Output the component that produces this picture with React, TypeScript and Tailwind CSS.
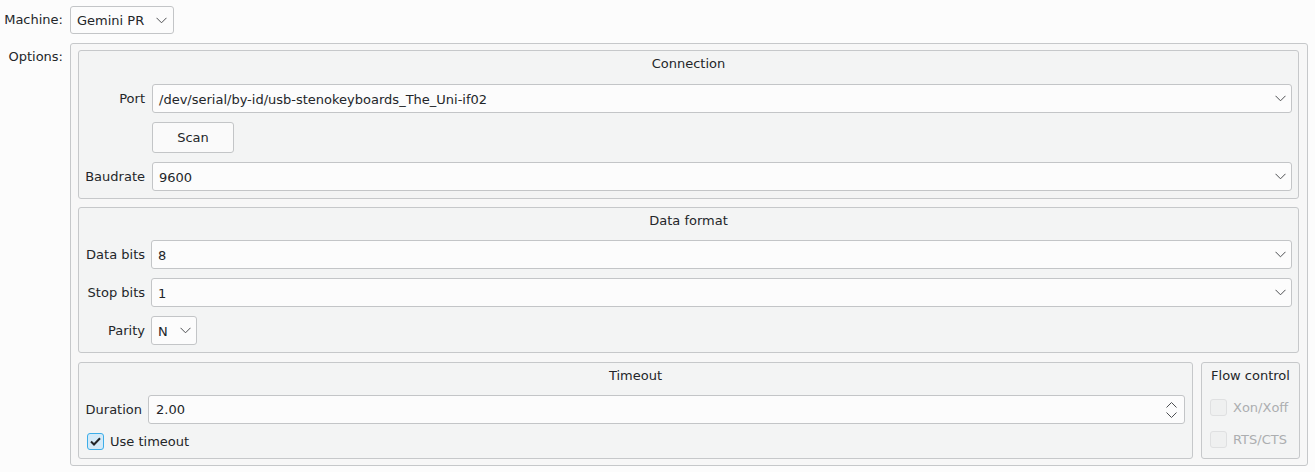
import React from 'react';

const Chevron = () => (
  <svg width="11" height="7" viewBox="0 0 11 7" className="shrink-0">
    <path d="M0.5 0.8 L5.5 5.8 L10.5 0.8" fill="none" stroke="#4d4f52" strokeWidth="1" />
  </svg>
);

function Combo({ value, className = '' }: { value: string; className?: string }) {
  return (
    <div className={`h-[29px] flex items-center justify-between pl-[6px] pr-[5px] border border-[#c3c5c7] rounded-[3px] bg-[#fcfcfc] ${className}`}>
      <span className="pt-[2px]">{value}</span>
      <Chevron />
    </div>
  );
}

function Group({ title, className = '', children }: { title: string; className?: string; children: React.ReactNode }) {
  return (
    <div className={`border border-[#c6c8ca] rounded-[3px] bg-[#f3f4f4] ${className}`}>
      <div className="h-[26px] flex items-center justify-center">{title}</div>
      {children}
    </div>
  );
}

function Row({ label, labelW, children }: { label: string; labelW: string; children: React.ReactNode }) {
  return (
    <div className="flex items-center">
      <div className={`${labelW} text-right shrink-0`}>{label}</div>
      {children}
    </div>
  );
}

function Check({ label, checked, disabled }: { label: string; checked?: boolean; disabled?: boolean }) {
  return (
    <div className={`flex items-center gap-[6px] ${disabled ? 'text-[#acaeb0]' : ''}`}>
      {checked ? (
        <div className="w-[17px] h-[17px] rounded-[3px] border border-[#3daee9] bg-[#d4eaf8] flex items-center justify-center">
          <svg width="11" height="9" viewBox="0 0 11 9">
            <path d="M1 4.5 L4 7.5 L10 1.2" fill="none" stroke="#232629" strokeWidth="2" />
          </svg>
        </div>
      ) : (
        <div className="w-[17px] h-[17px] rounded-[3px] border border-[#dfe0e1] bg-[#eff0f0]" />
      )}
      <span>{label}</span>
    </div>
  );
}

export default function App() {
  return (
    <div className="w-[1315px] h-[472px] bg-[#fcfcfc] text-[#232629] text-[13px] leading-[16px] font-['DejaVu_Sans',sans-serif] overflow-hidden">
      <div className="flex items-center pt-[6px]">
        <div className="w-[63px] text-right">Machine:</div>
        <div className="ml-[7px] w-[104px] h-[28px] flex items-center justify-between pl-[6px] pr-[6px] border border-[#c3c5c7] rounded-[3px] bg-[#fcfcfc]">
          <span className="pt-[1px]">Gemini PR</span>
          <Chevron />
        </div>
      </div>

      <div className="flex mt-[9px]">
        <div className="w-[63px] text-right pt-[6px]">Options:</div>
        <div className="ml-[7px] w-[1238px] h-[423px] border border-[#c6c8ca] rounded-[3px] bg-[#f7f7f7] pl-[7px] pt-[6px] flex flex-col gap-[8px]">
          <Group title="Connection" className="w-[1221px] pb-[7px]">
            <div className="flex flex-col gap-[9px] pt-[7px]">
              <Row label="Port" labelW="w-[66px]">
                <Combo value="/dev/serial/by-id/usb-stenokeyboards_The_Uni-if02" className="ml-[7px] w-[1140px]" />
              </Row>
              <div className="ml-[73px] w-[82px] h-[31px] flex items-center justify-center border border-[#c3c5c7] rounded-[3px] bg-[#fafafa]">
                Scan
              </div>
              <Row label="Baudrate" labelW="w-[66px]">
                <Combo value="9600" className="ml-[7px] w-[1140px]" />
              </Row>
            </div>
          </Group>

          <Group title="Data format" className="w-[1221px] pb-[7px]">
            <div className="flex flex-col gap-[9px] pt-[6px]">
              <Row label="Data bits" labelW="w-[66px]">
                <Combo value="8" className="ml-[6px] w-[1141px]" />
              </Row>
              <Row label="Stop bits" labelW="w-[66px]">
                <Combo value="1" className="ml-[6px] w-[1141px]" />
              </Row>
              <Row label="Parity" labelW="w-[66px]">
                <Combo value="N" className="ml-[6px] w-[46px]" />
              </Row>
            </div>
          </Group>

          <div className="flex gap-[8px] mt-[1px]">
            <Group title="Timeout" className="w-[1115px] h-[97px]">
              <div className="pt-[6px]">
                <Row label="Duration" labelW="w-[63px]">
                  <div className="ml-[6px] w-[1037px] h-[29px] flex items-center justify-between pl-[7px] pr-[7px] border border-[#c3c5c7] rounded-[3px] bg-[#fcfcfc]">
                    <span className="pt-[1px]">2.00</span>
                    <div className="flex flex-col gap-[4px]">
                      <svg width="11" height="6" viewBox="0 0 11 6">
                        <path d="M0.5 5.5 L5.5 0.5 L10.5 5.5" fill="none" stroke="#4d4f52" strokeWidth="1" />
                      </svg>
                      <svg width="11" height="6" viewBox="0 0 11 6">
                        <path d="M0.5 0.5 L5.5 5.5 L10.5 0.5" fill="none" stroke="#4d4f52" strokeWidth="1" />
                      </svg>
                    </div>
                  </div>
                </Row>
                <div className="pl-[8px] pt-[9px]">
                  <Check label="Use timeout" checked />
                </div>
              </div>
            </Group>

            <Group title="Flow control" className="w-[99px] h-[97px]">
              <div className="pl-[8px] pt-[10px] flex flex-col gap-[15px]">
                <Check label="Xon/Xoff" disabled />
                <Check label="RTS/CTS" disabled />
              </div>
            </Group>
          </div>
        </div>
      </div>
    </div>
  );
}
